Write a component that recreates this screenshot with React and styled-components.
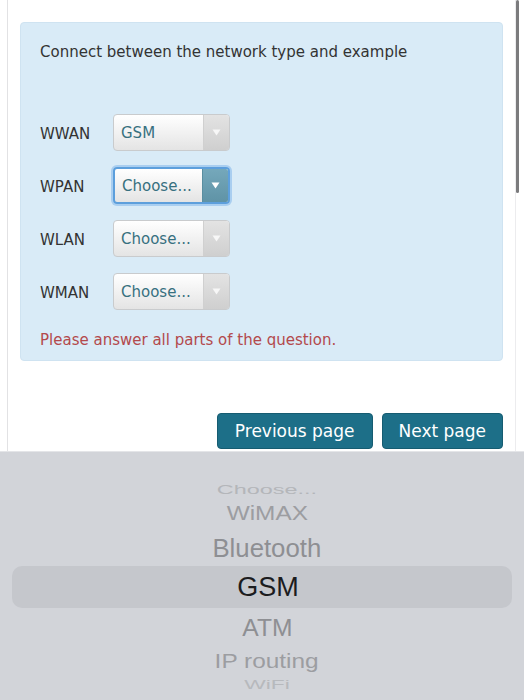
import styled, { createGlobalStyle, css } from "styled-components";

const Global = createGlobalStyle`
  html, body {
    margin: 0;
    padding: 0;
    background: #ffffff;
    overflow: hidden;
  }
  * { box-sizing: border-box; }
`;

const Page = styled.div`
  position: relative;
  width: 524px;
  height: 700px;
  display: flex;
  flex-direction: column;
  font-family: "DejaVu Sans", Verdana, sans-serif;
`;

const Content = styled.div`
  height: 451px;
  margin-left: 7px;
  width: 509px;
  border-left: 1px solid #e2e2e4;
  border-right: 1px solid #ececee;
  display: flex;
  flex-direction: column;
`;

const Scrollbar = styled.div`
  position: absolute;
  top: 0;
  right: 5px;
  width: 3px;
  height: 193px;
  border-radius: 2px;
  background: #7b7b7d;
`;

const Question = styled.div`
  margin: 22px 12px 0 12px;
  padding: 19px 19px 10px 19px;
  background: #d9ebf7;
  border: 1px solid #cfe3f1;
  border-radius: 4px;
  display: flex;
  flex-direction: column;
`;

const Title = styled.div`
  font-size: 15px;
  line-height: 20px;
  color: #333333;
  margin-bottom: 52px;
`;

const Rows = styled.div`
  display: flex;
  flex-direction: column;
  gap: 16px;
`;

const Row = styled.div`
  display: flex;
  align-items: center;
  height: 37px;
`;

const Label = styled.div`
  width: 73px;
  font-size: 15px;
  color: #333333;
  padding-top: 3px;
`;

const Select = styled.div`
  width: 117px;
  height: 37px;
  display: flex;
  border-radius: 4px;
  border: 1px solid #c9cbcd;
  background: linear-gradient(#ffffff, #e4e4e4);
  overflow: hidden;
  ${(p) =>
    p.focused &&
    css`
      border: 2px solid #5d9fdc;
      box-shadow: 0 0 0 2px rgba(110, 170, 230, 0.45);
    `}
`;

const Value = styled.div`
  flex: 1;
  display: flex;
  align-items: center;
  padding-left: 7px;
  font-size: 15px;
  color: #37707f;
`;

const Arrow = styled.div`
  width: 26px;
  display: flex;
  align-items: center;
  justify-content: center;
  background: ${(p) =>
    p.focused
      ? "linear-gradient(#75a8bb, #5f93a6)"
      : "linear-gradient(#e3e3e3, #cfcfcf)"};
  border-left: 1px solid ${(p) => (p.focused ? "#5a8ea0" : "#d0d0d0")};
`;

const Error = styled.div`
  margin-top: 20px;
  font-size: 15px;
  line-height: 20px;
  color: #b3494c;
`;

const Buttons = styled.div`
  margin: 52px 12px 0 0;
  display: flex;
  justify-content: flex-end;
  gap: 9px;
`;

const Button = styled.button`
  height: 36px;
  padding: 0 ${(p) => p.pad}px;
  font-family: "DejaVu Sans", Verdana, sans-serif;
  font-size: 17px;
  color: #ffffff;
  background: #1d6f88;
  border: 1px solid #165c71;
  border-radius: 4px;
`;

const Picker = styled.div`
  flex: 1;
  background: #d2d4d9;
  border-top: 1px solid #e4e5e8;
  padding-top: 26px;
  display: flex;
  flex-direction: column;
  font-family: "Liberation Sans", Arial, sans-serif;
`;

const Item = styled.div`
  height: ${(p) => p.h}px;
  padding-top: ${(p) => p.pt || 0}px;
  padding-left: 10px;
  display: flex;
  align-items: center;
  justify-content: center;
  font-size: ${(p) => p.size}px;
  color: ${(p) => p.color};
`;

const Stretch = styled.span`
  display: inline-block;
  transform: scaleX(${(p) => p.sx});
`;

const Selected = styled.div`
  height: 42px;
  margin: 0 12px;
  border-radius: 10px;
  background: #c5c7cc;
  display: flex;
  align-items: center;
  justify-content: center;
  padding-left: 12px;
  font-size: 27px;
  color: #1c1c1e;
`;

function Triangle({ focused }) {
  return (
    <svg width="9" height="7" viewBox="0 0 9 7">
      <path d="M0.5 0.5 L8.5 0.5 L4.5 6.5 Z" fill={focused ? "#ffffff" : "#f7f7f7"} />
    </svg>
  );
}

const rows = [
  { label: "WWAN", value: "GSM" },
  { label: "WPAN", value: "Choose...", focused: true },
  { label: "WLAN", value: "Choose..." },
  { label: "WMAN", value: "Choose..." },
];

export default function App() {
  return (
    <Page>
      <Global />
      <Content>
        <Question>
          <Title>Connect between the network type and example</Title>
          <Rows>
            {rows.map((r) => (
              <Row key={r.label}>
                <Label>{r.label}</Label>
                <Select focused={r.focused}>
                  <Value>{r.value}</Value>
                  <Arrow focused={r.focused}>
                    <Triangle focused={r.focused} />
                  </Arrow>
                </Select>
              </Row>
            ))}
          </Rows>
          <Error>Please answer all parts of the question.</Error>
        </Question>
        <Buttons>
          <Button pad={17}>Previous page</Button>
          <Button pad={16}>Next page</Button>
        </Buttons>
      </Content>
      <Picker>
        <Item h={22} size={13} color="#b4b6ba"><Stretch sx={1.8}>Choose...</Stretch></Item>
        <Item h={26} size={20} color="#9c9da1"><Stretch sx={1.22}>WiMAX</Stretch></Item>
        <Item h={40} pt={4} size={25} color="#8e8f93"><Stretch sx={1.03}>Bluetooth</Stretch></Item>
        <Selected>GSM</Selected>
        <Item h={40} size={23} color="#8e8f93"><Stretch sx={1.07}>ATM</Stretch></Item>
        <Item h={26} size={20} color="#9c9da1"><Stretch sx={1.22}>IP routing</Stretch></Item>
        <Item h={22} size={12} color="#b7b9bd"><Stretch sx={1.9}>WiFi</Stretch></Item>
      </Picker>
      <Scrollbar />
    </Page>
  );
}
